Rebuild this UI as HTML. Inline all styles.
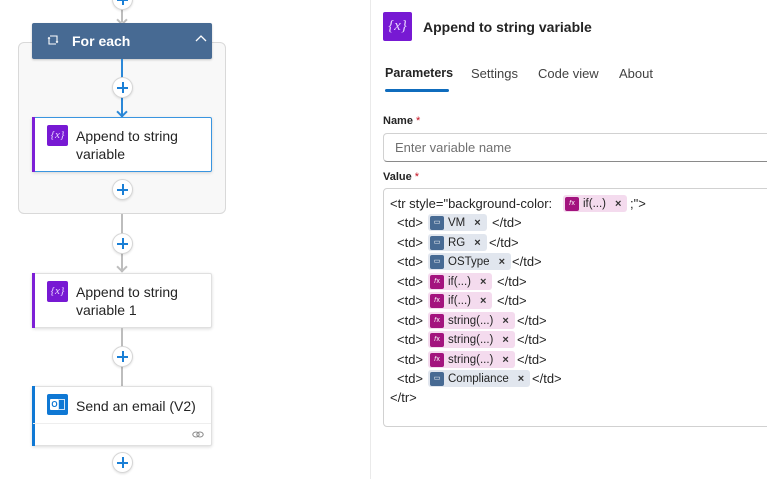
<!DOCTYPE html>
<html><head><style>
*{box-sizing:border-box;margin:0;padding:0}
body{width:767px;height:479px;overflow:hidden;background:#fff;font-family:"Liberation Sans",sans-serif;color:#242424;position:relative}
.abs{position:absolute}
.left{position:absolute;left:0;top:0;width:370px;height:479px;background:#fff}
.vline{position:absolute;width:2px;background:#bdbdbd;left:121px}
.plus{position:absolute;width:21px;height:21px;border-radius:50%;background:#fff;border:1px solid #d6d6d6;left:112px;box-shadow:0 1px 2px rgba(0,0,0,.12)}
.plus:before{content:"";position:absolute;left:4px;top:9px;width:11px;height:1.5px;background:#1a7fd6}
.plus:after{content:"";position:absolute;left:9px;top:4px;width:1.5px;height:11px;background:#1a7fd6}
.card{position:absolute;left:32px;width:180px;background:#fff;border:1px solid #e0e0e0;box-shadow:0 1px 3px rgba(0,0,0,.15);border-radius:2px}
.card .bar{position:absolute;left:-1px;top:-1px;bottom:-1px;width:3px;background:#7d1fd6}
.card .t{position:absolute;left:43px;top:9px;font-size:14px;line-height:18px;color:#242424}
.vicon{position:absolute;width:21px;height:21px;background:#7719d3;border-radius:2px;color:#e8d5ff;font-family:"Liberation Serif",serif;font-style:italic;font-size:11px;text-align:center;line-height:21px}
.tok{position:absolute;height:17px;border-radius:3px;font-size:11.5px;padding-left:20px;padding-right:6px;color:#242424;display:flex;align-items:center;white-space:nowrap}
.tok i{position:absolute;left:2px;top:2px;width:14px;height:14px;border-radius:2px;font-style:normal;font-size:7px;color:#fff;text-align:center;line-height:14px}
.tok b{font-weight:bold;font-size:11px;margin-left:9px;color:#333}
.fx{background:#f4dbee}.fx i{background:#a3137e}
.dy{background:#e1e6ee}.dy i{background:#476a93}
.ln{position:absolute;font-size:13px;line-height:17px;color:#242424;white-space:nowrap}
</style></head><body>
<div class="left">
 <div class="vline" style="top:0;height:22px"></div>
 <div class="plus" style="top:-11px"></div>
 <div class="abs" style="left:118px;top:16px;width:8px;height:8px;border-right:2px solid #bdbdbd;border-bottom:2px solid #bdbdbd;transform:rotate(45deg)"></div>
 <div class="abs" style="left:18px;top:42px;width:208px;height:172px;background:#f8f8f8;border:1px solid #d9d9d9;border-radius:6px"></div>
 <div class="abs" style="left:32px;top:23px;width:180px;height:36px;background:#476a93;border-radius:2px;box-shadow:0 1px 2px rgba(0,0,0,.2)">
  <svg class="abs" style="left:15px;top:12px" width="12" height="10" viewBox="0 0 12 10"><path d="M3 1H10V7M9 9H2V3M1 3.5L2 2.5 3 3.5M9 6.5L10 7.5 11 6.5" stroke="#fff" stroke-width="1.1" fill="none"/></svg>
  <div class="abs" style="left:40px;top:10px;color:#fff;font-size:14px;font-weight:bold">For each</div>
  <svg class="abs" style="left:163px;top:11px" width="12" height="8" viewBox="0 0 12 8"><path d="M1 7L6 2 11 7" stroke="#fff" stroke-width="1.3" fill="none"/></svg>
 </div>
 <div class="vline" style="top:59px;height:56px;background:#2b88d8"></div>
 <div class="abs" style="left:118px;top:108px;width:8px;height:8px;border-right:2px solid #2b88d8;border-bottom:2px solid #2b88d8;transform:rotate(45deg)"></div>
 <div class="plus" style="top:77px"></div>
 <div class="card" style="top:117px;height:55px;border:1.5px solid #3a95e0"><div class="bar"></div><div class="vicon" style="left:14px;top:7px">{x}</div><div class="t">Append to string<br>variable</div></div>
 <div class="plus" style="top:179px"></div>
 <div class="vline" style="top:214px;height:56px"></div>
 <div class="plus" style="top:233px"></div>
 <div class="abs" style="left:118px;top:263px;width:8px;height:8px;border-right:2px solid #bdbdbd;border-bottom:2px solid #bdbdbd;transform:rotate(45deg)"></div>
 <div class="card" style="top:273px;height:55px"><div class="bar"></div><div class="vicon" style="left:14px;top:7px">{x}</div><div class="t">Append to string<br>variable 1</div></div>
 <div class="vline" style="top:328px;height:58px"></div>
 <div class="plus" style="top:346px"></div>
 <div class="card" style="top:386px;height:60px"><div class="bar" style="background:#0f78d4"></div>
  <div class="abs" style="left:14px;top:7px;width:21px;height:21px;background:#0f78d4;border-radius:2px"><div class="abs" style="left:3px;top:5px;width:9px;height:11px;background:#fff;border-radius:1px;font-size:8px;color:#0f78d4;text-align:center;line-height:11px;font-weight:bold">O</div><div class="abs" style="left:11px;top:5px;width:7px;height:11px;border:1px solid #cfe4f7"></div></div>
  <div class="t" style="top:10px">Send an email (V2)</div>
  <div class="abs" style="left:0;right:0;top:36px;height:1px;background:#eee"></div>
  <svg class="abs" style="left:159px;top:43px" width="12" height="9" viewBox="0 0 12 9"><ellipse cx="4" cy="4.5" rx="3.2" ry="2.5" stroke="#888" fill="none"/><ellipse cx="8" cy="4.5" rx="3.2" ry="2.5" stroke="#888" fill="none"/></svg>
 </div>
 <div class="plus" style="top:452px"></div>
</div>
<div class="abs" style="left:370px;top:0;width:1px;height:479px;background:#eaeaea"></div>
<div class="vicon" style="left:383px;top:12px;width:29px;height:29px;line-height:29px;font-size:15px">{x}</div>
<div class="abs" style="left:423px;top:19px;font-size:14px;font-weight:bold;color:#242424">Append to string variable</div>
<div class="abs" style="left:385px;top:66px;font-size:12.5px;font-weight:bold">Parameters</div>
<div class="abs" style="left:471px;top:66px;font-size:13px;color:#424242">Settings</div>
<div class="abs" style="left:538px;top:66px;font-size:13px;color:#424242">Code view</div>
<div class="abs" style="left:619px;top:66px;font-size:13px;color:#424242">About</div>
<div class="abs" style="left:385px;top:89px;width:64px;height:3px;background:#0f6cbd;border-radius:2px"></div>
<div class="abs" style="left:383px;top:115px;font-size:11px;font-weight:bold">Name <span style="color:#c50f1f;font-weight:normal">*</span></div>
<div class="abs" style="left:383px;top:133px;width:400px;height:29px;border:1px solid #d1d1d1;border-bottom-color:#8a8a8a;border-radius:4px"></div>
<div class="abs" style="left:395px;top:140px;font-size:13px;color:#707070">Enter variable name</div>
<div class="abs" style="left:383px;top:171px;font-size:11px;font-weight:bold">Value <span style="color:#c50f1f;font-weight:normal">*</span></div>
<div class="abs" style="left:383px;top:188px;width:400px;height:239px;border:1px solid #d1d1d1;border-radius:4px"></div>
<div class="ln" style="left:390px;top:195px">&lt;tr style="background-color:</div>
<div class="tok fx" style="left:563px;top:195px"><i>𝑓x</i>if(...)<b>×</b></div>
<div class="ln" style="left:630px;top:195px">;"&gt;</div>
<div class="ln" style="left:397px;top:214px">&lt;td&gt;</div><div class="tok dy" style="left:428px;top:214px"><i>▭</i>VM<b>×</b></div><div class="ln" style="left:492px;top:214px">&lt;/td&gt;</div>
<div class="ln" style="left:397px;top:234px">&lt;td&gt;</div><div class="tok dy" style="left:428px;top:234px"><i>▭</i>RG<b>×</b></div><div class="ln" style="left:489px;top:234px">&lt;/td&gt;</div>
<div class="ln" style="left:397px;top:253px">&lt;td&gt;</div><div class="tok dy" style="left:428px;top:253px"><i>▭</i>OSType<b>×</b></div><div class="ln" style="left:512px;top:253px">&lt;/td&gt;</div>
<div class="ln" style="left:397px;top:273px">&lt;td&gt;</div><div class="tok fx" style="left:428px;top:273px"><i>𝑓x</i>if(...)<b>×</b></div><div class="ln" style="left:497px;top:273px">&lt;/td&gt;</div>
<div class="ln" style="left:397px;top:292px">&lt;td&gt;</div><div class="tok fx" style="left:428px;top:292px"><i>𝑓x</i>if(...)<b>×</b></div><div class="ln" style="left:497px;top:292px">&lt;/td&gt;</div>
<div class="ln" style="left:397px;top:312px">&lt;td&gt;</div><div class="tok fx" style="left:428px;top:312px"><i>𝑓x</i>string(...)<b>×</b></div><div class="ln" style="left:517px;top:312px">&lt;/td&gt;</div>
<div class="ln" style="left:397px;top:331px">&lt;td&gt;</div><div class="tok fx" style="left:428px;top:331px"><i>𝑓x</i>string(...)<b>×</b></div><div class="ln" style="left:517px;top:331px">&lt;/td&gt;</div>
<div class="ln" style="left:397px;top:351px">&lt;td&gt;</div><div class="tok fx" style="left:428px;top:351px"><i>𝑓x</i>string(...)<b>×</b></div><div class="ln" style="left:517px;top:351px">&lt;/td&gt;</div>
<div class="ln" style="left:397px;top:370px">&lt;td&gt;</div><div class="tok dy" style="left:428px;top:370px"><i>▭</i>Compliance<b>×</b></div><div class="ln" style="left:532px;top:370px">&lt;/td&gt;</div>
<div class="ln" style="left:390px;top:389px">&lt;/tr&gt;</div>
</body></html>
